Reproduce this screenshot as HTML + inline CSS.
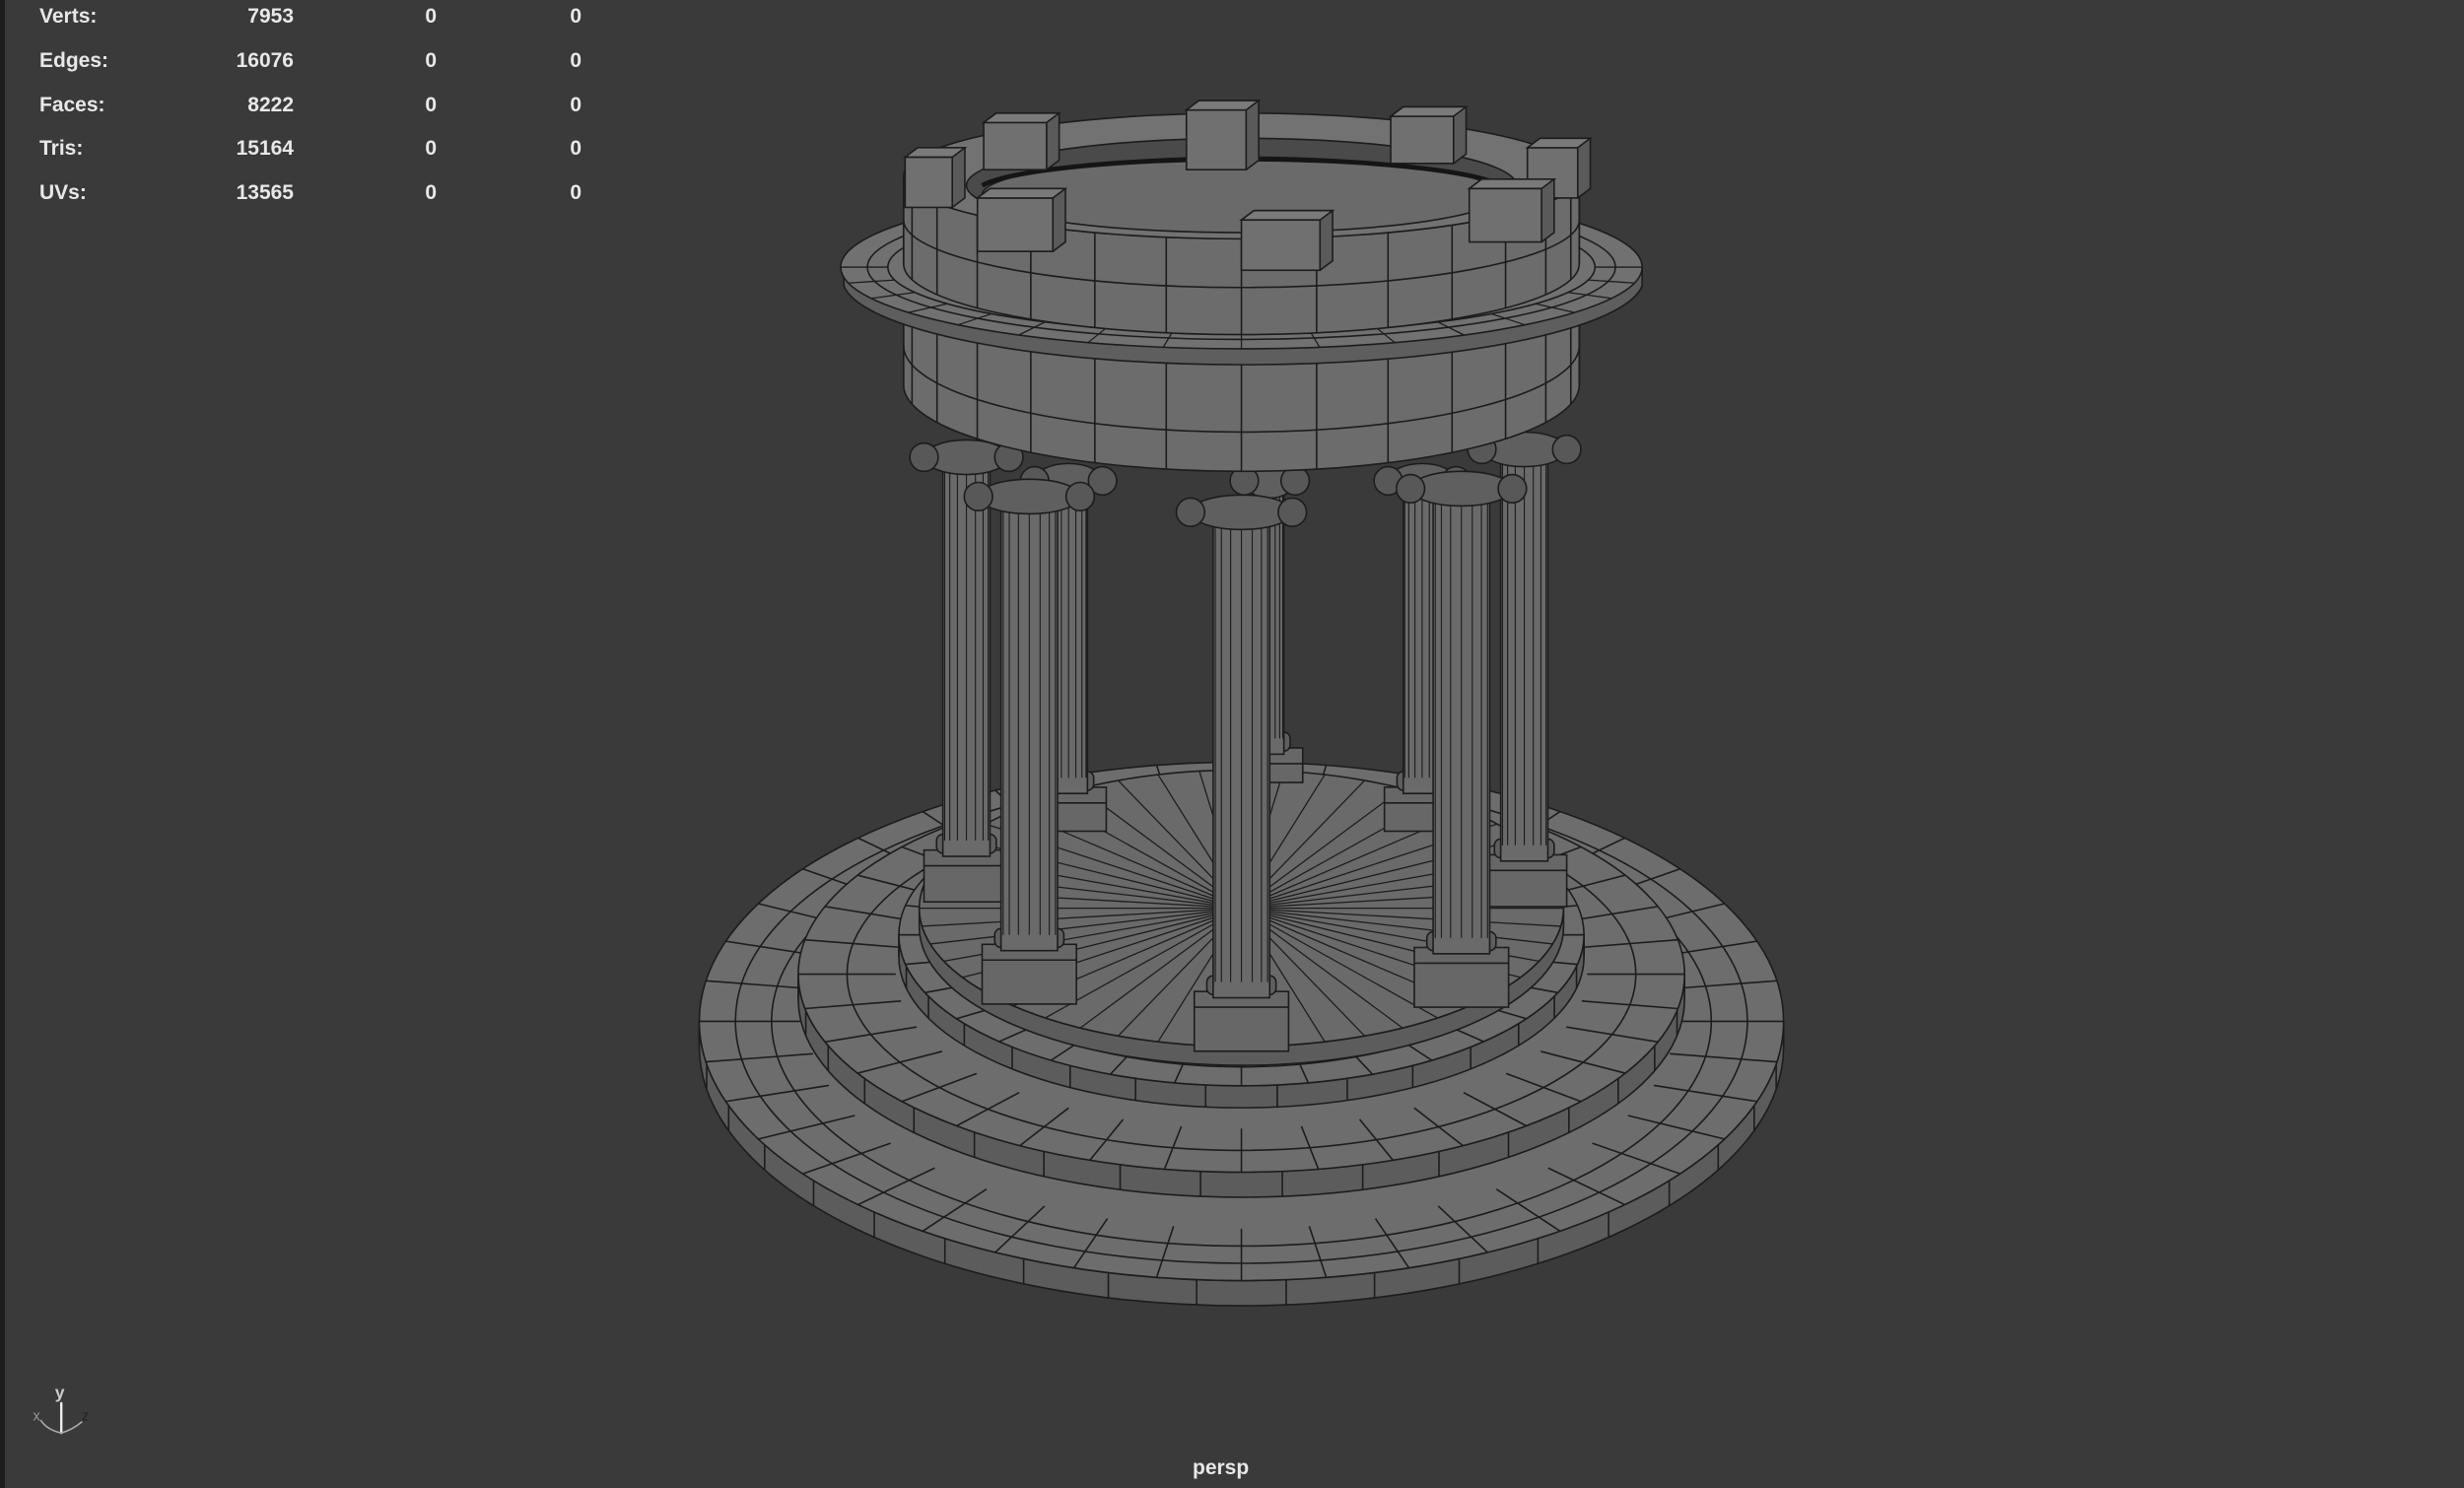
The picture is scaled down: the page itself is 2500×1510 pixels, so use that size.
<!DOCTYPE html>
<html><head><meta charset="utf-8"><style>
html,body{margin:0;padding:0;background:#3a3a3a;width:2500px;height:1510px;overflow:hidden}
#v{position:absolute;left:0;top:0;width:2500px;height:1510px}
.t{position:absolute;font:bold 21px "Liberation Sans",sans-serif;color:#e8e8e8}
.r{text-align:right;width:120px}
#lb{position:absolute;left:0;top:0;width:5px;height:1510px;background:#1e1e1e}
</style></head><body>
<svg id="v" viewBox="0 0 1568 947" preserveAspectRatio="none" xmlns="http://www.w3.org/2000/svg">
<rect width="1568" height="947" fill="#3a3a3a"/>
<g id="m" stroke="#1c1c1c" stroke-width="1"></g>
<g stroke-linecap="round">
<line x1="39" y1="893" x2="39" y2="912" stroke="#eee" stroke-width="1.5"/>
<path d="M26 904 Q30 910 39 912 Q46 910 52 905" stroke="#aaa" fill="none" stroke-width="1"/>
</g>
<text x="35" y="890" font-family="Liberation Sans" font-weight="bold" font-size="11" fill="#ccc">y</text>
<text x="21" y="904" font-family="Liberation Sans" font-size="9" fill="#999">x</text>
<text x="52" y="904" font-family="Liberation Sans" font-size="9" fill="#222">z</text>
</svg>
<div id="lb"></div>
<div class="t" style="left:40px;top:5px">Verts:</div><div class="t r" style="left:178px;top:5px">7953</div><div class="t r" style="left:323px;top:5px">0</div><div class="t r" style="left:470px;top:5px">0</div>
<div class="t" style="left:40px;top:50px">Edges:</div><div class="t r" style="left:178px;top:50px">16076</div><div class="t r" style="left:323px;top:50px">0</div><div class="t r" style="left:470px;top:50px">0</div>
<div class="t" style="left:40px;top:95px">Faces:</div><div class="t r" style="left:178px;top:95px">8222</div><div class="t r" style="left:323px;top:95px">0</div><div class="t r" style="left:470px;top:95px">0</div>
<div class="t" style="left:40px;top:139px">Tris:</div><div class="t r" style="left:178px;top:139px">15164</div><div class="t r" style="left:323px;top:139px">0</div><div class="t r" style="left:470px;top:139px">0</div>
<div class="t" style="left:40px;top:184px">UVs:</div><div class="t r" style="left:178px;top:184px">13565</div><div class="t r" style="left:323px;top:184px">0</div><div class="t r" style="left:470px;top:184px">0</div>
<div class="t" style="left:1210px;top:1478px;font-size:21px">persp</div>
<script>
var g=document.getElementById('m'),S='';
function E(cx,cy,rx,ry,f){S+='<ellipse cx="'+cx+'" cy="'+cy+'" rx="'+rx+'" ry="'+ry+'" fill="'+f+'"/>';}
function L(a,b,c,d,w){S+='<line x1="'+a+'" y1="'+b+'" x2="'+c+'" y2="'+d+'"'+(w?' stroke-width="'+w+'"':'')+'/>';}
function P(d,f){S+='<path d="'+d+'" fill="'+f+'"/>';}
var cx=790;
function step(cy,rx,ry,h,rin,n,rings){
 P('M'+(cx-rx)+' '+cy+' A'+rx+' '+ry+' 0 0 0 '+(cx+rx)+' '+cy+' L'+(cx+rx)+' '+(cy+h)+' A'+rx+' '+ry+' 0 0 1 '+(cx-rx)+' '+(cy+h)+'Z','#5c5c5c');
 for(var i=0;i<n;i++){var a=Math.PI*i/(n-1);L(cx-rx*Math.cos(a),cy+ry*Math.sin(a),cx-rx*Math.cos(a),cy+h+ry*Math.sin(a));}
 E(cx,cy,rx,ry,'#6d6d6d');
 for(var k=1;k<rings;k++){var f=1-(1-rin)*k/rings;S+='<ellipse cx="'+cx+'" cy="'+cy+'" rx="'+rx*f+'" ry="'+ry*f+'" fill="none"/>';}
 for(var i=0;i<n*2;i++){var a=2*Math.PI*i/(n*2);L(cx+rx*Math.cos(a),cy+ry*Math.sin(a),cx+rx*rin*Math.cos(a),cy+ry*rin*Math.sin(a));}
}
step(650,345,165,16,0.8,20,3);
step(620,282,126,16,0.78,18,2);
step(595,218,96,14,0.75,16,2);
P('M'+(cx-205)+' 578 A205 88 0 0 0 '+(cx+205)+' 578 L'+(cx+205)+' 590 A205 88 0 0 1 '+(cx-205)+' 590Z','#5c5c5c');
E(cx,578,205,88,'#6a6a6a');
for(var i=0;i<48;i++){var a=2*Math.PI*i/48;L(cx+18*Math.cos(a),578+8*Math.sin(a),cx+205*Math.cos(a),578+88*Math.sin(a),0.8);}
function col(x,top,bot,w){
 S+='<rect x="'+(x-w/2-12)+'" y="'+(bot-4)+'" width="'+(w+24)+'" height="'+(Math.round(w*0.9)+6)+'" fill="#676767"/>';
 L(x-w/2-12,bot+6,x+w/2+12,bot+6);
 S+='<rect x="'+(x-w/2-4)+'" y="'+(bot-14)+'" width="'+(w+8)+'" height="12" fill="#5e5e5e" rx="4"/>';
 S+='<rect x="'+(x-w/2)+'" y="'+top+'" width="'+w+'" height="'+(bot-top)+'" fill="#6a6a6a"/>';
 for(var j=1;j<8;j++){var xx=x-w/2+w*(0.5-0.5*Math.cos(Math.PI*j/8));L(xx,top,xx,bot-10,0.7);}
 S+='<ellipse cx="'+x+'" cy="'+(top+6)+'" rx="'+(w*0.9)+'" ry="11" fill="#5f5f5f"/>';
 S+='<circle cx="'+(x-w*0.9)+'" cy="'+(top+6)+'" r="9" fill="#585858"/><circle cx="'+(x+w*0.9)+'" cy="'+(top+6)+'" r="9" fill="#585858"/>';
}
col(680,300,505,24);col(905,300,505,24);col(808,300,480,18);
col(615,285,545,30);col(970,280,548,30);
col(655,310,605,36);col(930,305,607,36);col(790,320,635,36);
P('M575 190 L1005 190 L1005 245 A215 55 0 0 1 575 245Z','#6c6c6c');
for(var i=0;i<=14;i++){var a=Math.PI*i/14,x=cx-215*Math.cos(a);L(x,190+55*Math.sin(a)*0.2,x,245+55*Math.sin(a));}
S+='<path d="M575 220 A215 55 0 0 0 1005 220" fill="none"/>';
P('M537 170 A255 52 0 0 0 1045 170 L1045 182 A255 55 0 0 1 537 182Z','#5e5e5e');
E(cx,170,255,52,'#717171');
S+='<ellipse cx="790" cy="170" rx="238" ry="46" fill="none"/><ellipse cx="790" cy="170" rx="225" ry="42" fill="none"/>';
for(var i=0;i<=16;i++){var a=Math.PI*i/16;L(cx-225*Math.cos(a),170+42*Math.sin(a),cx-255*Math.cos(a),170+52*Math.sin(a),0.8);}
P('M575 112 A215 40 0 0 0 1005 112 L1005 168 A215 45 0 0 1 575 168Z','#6c6c6c');
for(var i=0;i<=14;i++){var a=Math.PI*i/14,x=cx-215*Math.cos(a);L(x,112+40*Math.sin(a),x,168+45*Math.sin(a));}
S+='<path d="M575 140 A215 43 0 0 0 1005 140" fill="none"/>';
E(cx,112,215,40,'#727272');
E(cx,118,175,30,'#4a4a4a');
E(cx,124,165,24,'#6a6a6a');
S+='<path d="M625 118 A170 22 0 0 1 955 118" fill="none" stroke="#151515" stroke-width="3"/>';
function mer(x,y,w,h){P('M'+x+' '+y+' l8 -6 l'+w+' 0 l0 '+h+' l-8 6Z','#5a5a5a');S+='<rect x="'+x+'" y="'+y+'" width="'+w+'" height="'+h+'" fill="#707070"/>';P('M'+x+' '+y+' l8 -6 l'+w+' 0 l-8 6Z','#7a7a7a');}
mer(755,70,38,38);mer(626,78,40,30);mer(885,74,40,30);mer(576,100,30,32);mer(972,94,32,32);
mer(622,126,48,34);mer(790,140,50,32);mer(935,120,46,34);
g.innerHTML=S;
</script>
</body></html>
